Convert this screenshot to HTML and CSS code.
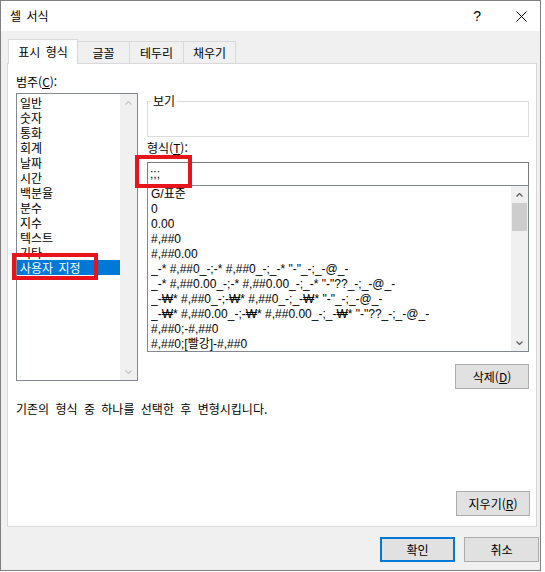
FILE: index.html
```html
<!DOCTYPE html>
<html lang="ko">
<head>
<meta charset="utf-8">
<title>셀 서식</title>
<link rel="stylesheet" href="styles.css">
</head>
<body>
<div class="window">
  <div class="titlebar">
    <span class="title">셀 서식</span>
    <span class="help">?</span>
    <svg class="close" width="11" height="11" viewBox="0 0 11 11"><path d="M0.5 0.5 L10.5 10.5 M10.5 0.5 L0.5 10.5" stroke="#000" stroke-width="1" fill="none"/></svg>
  </div>
  <div class="client">
    <div class="tabs">
      <div class="tab active">표시 형식</div>
      <div class="tab t-font">글꼴</div>
      <div class="tab t-border">테두리</div>
      <div class="tab t-fill">채우기</div>
    </div>
    <div class="panel">
      <div class="top">
        <div class="col-left">
          <div class="label">범주(<u>C</u>):</div>
          <div class="listbox cat">
            <ul class="items">
              <li><span>일반</span></li>
              <li><span>숫자</span></li>
              <li><span>통화</span></li>
              <li><span>회계</span></li>
              <li><span>날짜</span></li>
              <li><span>시간</span></li>
              <li><span>백분율</span></li>
              <li><span>분수</span></li>
              <li><span>지수</span></li>
              <li><span>텍스트</span></li>
              <li><span>기타</span></li>
              <li class="sel"><span>사용자 지정</span></li>
            </ul>
            <div class="vscroll disabled">
              <div class="sb-btn"><svg width="7" height="4" viewBox="0 0 7 4"><polyline points="0.5,3.5 3.5,0.5 6.5,3.5" fill="none" stroke="#c4c4c4" stroke-width="1.1"/></svg></div>
              <div class="sb-track"></div>
              <div class="sb-btn"><svg width="7" height="4" viewBox="0 0 7 4"><polyline points="0.5,0.5 3.5,3.5 6.5,0.5" fill="none" stroke="#c4c4c4" stroke-width="1.1"/></svg></div>
            </div>
          </div>
        </div>
        <div class="col-right">
          <fieldset class="preview">
            <legend>보기</legend>
            <div class="preview-body"></div>
          </fieldset>
          <div class="label fmt-label">형식(<u>T</u>):</div>
          <div class="textbox">;;;</div>
          <div class="listbox fmt">
            <ul class="items">
              <li><span>G/표준</span></li>
              <li><span>0</span></li>
              <li><span>0.00</span></li>
              <li><span>#,##0</span></li>
              <li><span>#,##0.00</span></li>
              <li><span>_-* #,##0_-;-* #,##0_-;_-* "-"_-;_-@_-</span></li>
              <li><span>_-* #,##0.00_-;-* #,##0.00_-;_-* "-"??_-;_-@_-</span></li>
              <li><span>_-₩* #,##0_-;-₩* #,##0_-;_-₩* "-"_-;_-@_-</span></li>
              <li><span>_-₩* #,##0.00_-;-₩* #,##0.00_-;_-₩* "-"??_-;_-@_-</span></li>
              <li><span>#,##0;-#,##0</span></li>
              <li><span>#,##0;[빨강]-#,##0</span></li>
            </ul>
            <div class="vscroll">
              <div class="sb-btn"><svg width="7" height="4" viewBox="0 0 7 4"><polyline points="0.5,3.5 3.5,0.5 6.5,3.5" fill="none" stroke="#606060" stroke-width="1.3"/></svg></div>
              <div class="sb-track"><div class="thumb"></div></div>
              <div class="sb-btn"><svg width="7" height="4" viewBox="0 0 7 4"><polyline points="0.5,0.5 3.5,3.5 6.5,0.5" fill="none" stroke="#606060" stroke-width="1.3"/></svg></div>
            </div>
          </div>
          <div class="btn-row del-row"><button class="btn">삭제(<u>D</u>)</button></div>
        </div>
      </div>
      <div class="desc">기존의 형식 중 하나를 선택한 후 변형시킵니다.</div>
      <div class="btn-row clear-row"><button class="btn">지우기(<u>R</u>)</button></div>
    </div>
    <div class="footer">
      <button class="btn default">확인</button>
      <button class="btn">취소</button>
    </div>
  </div>
  <div class="mark mark-cat"></div>
  <div class="mark mark-fmt"></div>
</div>
</body>
</html>
```

FILE: styles.css
```css
* {
  box-sizing: border-box;
}

html,
body {
  margin: 0;
  padding: 0;
  background: #ffffff;
}

body {
  font-family: "Noto Sans CJK KR", "Liberation Sans", sans-serif;
  font-size: 12px;
  color: #000000;
  word-spacing: 2px;
}

.window {
  position: relative;
  width: 541px;
  height: 571px;
  border: 1px solid #808080;
  background: #f0f0f0;
  display: flex;
  flex-direction: column;
}

.titlebar {
  flex: none;
  height: 30px;
  background: #ffffff;
  display: flex;
  align-items: center;
  padding-left: 9px;
}

.title {
  line-height: 16px;
}

.help {
  margin-left: auto;
  margin-right: 35px;
  font-family: "Liberation Sans", sans-serif;
  font-size: 14px;
  line-height: 16px;
}

.close {
  display: block;
  margin-right: 13px;
}

.client {
  flex: 1;
  display: flex;
  flex-direction: column;
  padding-top: 8px;
}

.tabs {
  flex: none;
  display: flex;
  align-items: flex-end;
  height: 25px;
  margin-left: 7px;
  margin-bottom: -1px;
  position: relative;
  z-index: 1;
}

.tab {
  height: 23px;
  border: 1px solid #d9d9d9;
  border-left: none;
  background: #f0f0f0;
  display: flex;
  align-items: center;
  justify-content: center;
  line-height: 16px;
  padding-top: 1px;
}

.tab.active {
  width: 70px;
  height: 25px;
  border-left: 1px solid #d9d9d9;
  border-bottom: none;
  background: #ffffff;
  padding-top: 0;
}

.t-font {
  width: 52px;
}

.t-border {
  width: 54px;
}

.t-fill {
  width: 52px;
}

.panel {
  flex: none;
  margin-left: 6px;
  width: 530px;
  height: 464px;
  border: 1px solid #d9d9d9;
  background: #ffffff;
  display: flex;
  flex-direction: column;
  padding: 10px 6px 10px 8px;
}

.top {
  display: flex;
  gap: 9px;
}

.col-left {
  flex: none;
  width: 122px;
}

.col-right {
  flex: none;
  width: 382px;
  display: flex;
  flex-direction: column;
}

.label {
  height: 16px;
  line-height: 16px;
  white-space: nowrap;
}

.listbox {
  border: 1px solid #828790;
  background: #ffffff;
  display: flex;
}

.cat {
  margin-top: 3px;
  height: 288px;
}

.items {
  flex: 1;
  min-width: 0;
  margin: 0;
  padding: 1px 0 0;
  list-style: none;
  overflow: hidden;
}

.items li {
  height: 15px;
  line-height: 15px;
  padding-left: 3px;
  white-space: nowrap;
  overflow: hidden;
}

.items li span {
  display: inline-block;
  height: 15px;
  line-height: 15px;
  vertical-align: top;
  overflow: hidden;
}

.items li.sel {
  background: #0078d7;
  color: #ffffff;
}

.vscroll {
  flex: none;
  width: 17px;
  background: #f0f0f0;
  display: flex;
  flex-direction: column;
}

.sb-btn {
  flex: none;
  height: 17px;
  display: flex;
  align-items: center;
  justify-content: center;
}

.sb-btn svg {
  display: block;
}

.sb-track {
  flex: 1;
}

.thumb {
  height: 28px;
  margin: 0 1px;
  background: #cdcdcd;
}

.preview {
  margin: 19px 0 0;
  padding: 0 4px 0 3px;
  border: 1px solid #dcdcdc;
  min-width: 0;
}

.preview legend {
  padding: 0 2px;
  line-height: 16px;
  font-size: 12px;
}

.preview-body {
  height: 27px;
}

.fmt-label {
  margin-top: 3px;
}

.textbox {
  margin-top: 6px;
  height: 23px;
  border: 1px solid #7a7a7a;
  border-bottom: none;
  padding-left: 2px;
  line-height: 22px;
  font-family: "Liberation Sans", "Noto Sans CJK KR", sans-serif;
  word-spacing: 0;
}

.fmt {
  height: 167px;
}

.fmt .items {
  font-family: "Liberation Sans", "Noto Sans CJK KR", sans-serif;
  word-spacing: 0;
}

.btn-row {
  display: flex;
  justify-content: flex-end;
}

.del-row {
  margin-top: 12px;
}

.clear-row {
  margin-top: auto;
}

.btn {
  width: 74px;
  height: 25px;
  padding: 0;
  border: 1px solid #adadad;
  background: #e1e1e1;
  color: #000000;
  font-family: "Noto Sans CJK KR", "Liberation Sans", sans-serif;
  font-size: 12px;
  line-height: 16px;
}

.desc {
  margin-top: 12px;
  line-height: 16px;
  white-space: nowrap;
  word-spacing: 3px;
}

.footer {
  flex: none;
  display: flex;
  justify-content: flex-end;
  gap: 9px;
  margin-top: 10px;
  padding-right: 1px;
}

.footer .btn {
  width: 75px;
}

.btn.default {
  border: 2px solid #0078d7;
}

.mark {
  position: absolute;
  border: 4px solid #e8141c;
}

.mark-cat {
  left: 11px;
  top: 252px;
  width: 86px;
  height: 27px;
}

.mark-fmt {
  left: 134px;
  top: 154px;
  width: 57px;
  height: 33px;
}
```
